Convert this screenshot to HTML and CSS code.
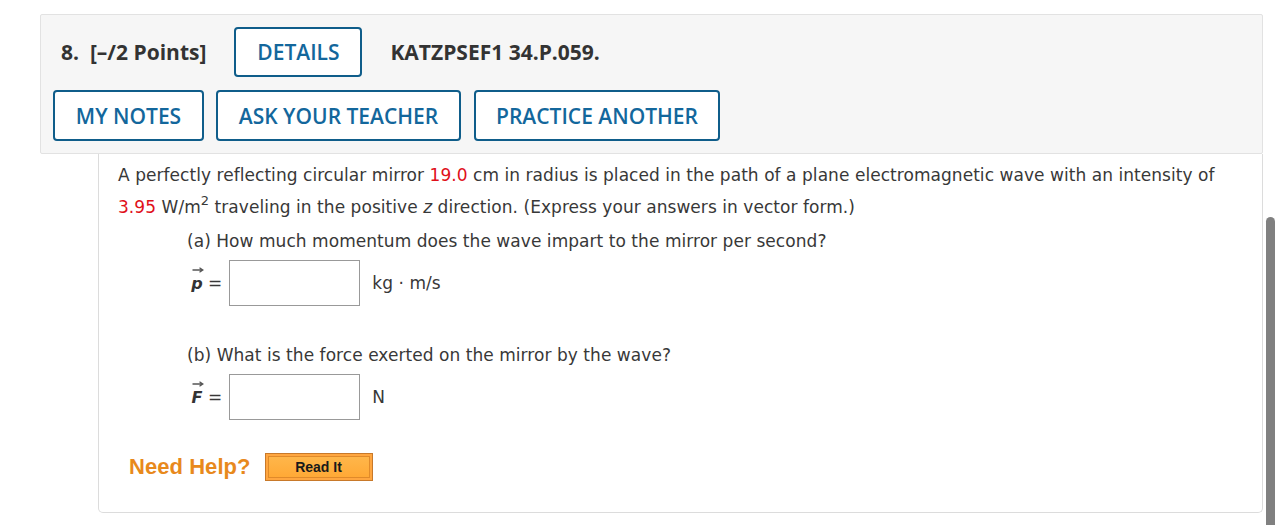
FILE: index.html
```html
<!DOCTYPE html>
<html>
<head>
<meta charset="utf-8">
<link rel="stylesheet" href="styles.css">
</head>
<body>
<div class="question">
  <div class="header">
    <div class="row1">
      <span class="qnum">8.&nbsp; [–/2 Points]</span>
      <button class="btn btn-details">DETAILS</button>
      <span class="qid">KATZPSEF1 34.P.059.</span>
    </div>
    <div class="row2">
      <button class="btn btn-notes">MY NOTES</button>
      <button class="btn btn-ask">ASK YOUR TEACHER</button>
      <button class="btn btn-practice">PRACTICE ANOTHER</button>
    </div>
  </div>
  <div class="qbody">
    <p class="intro">A perfectly reflecting circular mirror <span class="red">19.0</span> cm in radius is placed in the path of a plane electromagnetic wave with an intensity of <span class="red">3.95</span> W/m<sup>2</sup> traveling in the positive <i>z</i> direction. (Express your answers in vector form.)</p>
    <div class="part">
      <p class="prompt">(a) How much momentum does the wave impart to the mirror per second?</p>
      <div class="answer">
        <span class="vec"><svg class="arrow" width="12" height="6" viewBox="0 0 12 6"><path d="M0.5 3H10.5M7.5 0.8L10.8 3L7.5 5.2" fill="none" stroke="#555" stroke-width="1.3"/></svg><b><i>p</i></b></span>
        <span class="eq">=</span>
        <span class="box"></span>
        <span class="unit">kg · m/s</span>
      </div>
      <p class="prompt prompt-b">(b) What is the force exerted on the mirror by the wave?</p>
      <div class="answer">
        <span class="vec"><svg class="arrow" width="12" height="6" viewBox="0 0 12 6"><path d="M0.5 3H10.5M7.5 0.8L10.8 3L7.5 5.2" fill="none" stroke="#555" stroke-width="1.3"/></svg><b><i>F</i></b></span>
        <span class="eq">=</span>
        <span class="box"></span>
        <span class="unit">N</span>
      </div>
    </div>
    <div class="help">
      <span class="need">Need Help?</span>
      <button class="readit">Read It</button>
    </div>
  </div>
</div>
<div class="scrollthumb"></div>
</body>
</html>
```

FILE: styles.css
```css
html, body {
  margin: 0;
  padding: 0;
  background: #ffffff;
}
body {
  height: 525px;
  overflow: hidden;
  position: relative;
}
.question {
  margin: 14px 0 0 40px;
  width: 1223px;
}
.header {
  background: #f6f6f6;
  border: 1px solid #e2e2e2;
  border-radius: 2px;
  padding: 12px 0 12px 0;
  font-family: "Open Sans", "Noto Sans", sans-serif;
}
.row1 {
  display: flex;
  align-items: center;
  padding-left: 20px;
  height: 50px;
}
.qnum, .qid {
  font-weight: 700;
  font-size: 21px;
  color: #333333;
}
.btn {
  font-family: "Open Sans", "Noto Sans", sans-serif;
  font-size: 21px;
  font-weight: 600;
  color: #13679c;
  background: #ffffff;
  border: 2px solid #0f5d8a;
  border-radius: 4px;
  height: 51px;
  padding: 0;
  box-sizing: border-box;
}
.btn-details {
  margin-left: 28px;
  margin-right: 28px;
  width: 128px;
  height: 50px;
}
.row2 {
  display: flex;
  gap: 12px;
  padding-left: 12px;
  margin-top: 13px;
}
.btn-notes { width: 151px; }
.btn-ask { width: 245px; }
.btn-practice { width: 246px; margin-left: 1px; }

.qbody {
  margin-left: 58px;
  border: 1px solid #dcdcdc;
  border-top: none;
  border-radius: 0 0 5px 5px;
  height: 359px;
  box-sizing: border-box;
  padding: 5px 20px 0 19px;
  font-family: "DejaVu Sans", Verdana, sans-serif;
  font-size: 17px;
  letter-spacing: 0.05px;
  color: #383838;
}
.intro {
  margin: 0;
  line-height: 32px;
}
.red { color: #e0101a; }
sup {
  font-size: 13px;
  line-height: 0;
  vertical-align: 8px;
}
.part {
  padding-left: 69px;
}
.prompt {
  margin: 2px 0 0 0;
  line-height: 32px;
}
.prompt-b {
  margin-top: 33px;
}
.answer {
  display: flex;
  align-items: center;
  height: 46px;
  margin-top: 3px;
}
.vec {
  position: relative;
  width: 16px;
  margin-left: 2px;
  display: inline-block;
  text-align: center;
  font-size: 16px;
  color: #333;
}
.vec b { font-weight: 700; }
.arrow {
  position: absolute;
  top: -7px;
  left: 3px;
}
.eq {
  margin-left: 3px;
  margin-right: 7px;
}
.box {
  display: inline-block;
  width: 131px;
  height: 46px;
  box-sizing: border-box;
  border: 1px solid #999999;
  background: #fff;
}
.unit {
  margin-left: 12px;
}
.help {
  display: flex;
  align-items: center;
  margin-top: 33px;
  padding-left: 11px;
}
.need {
  font-family: "Liberation Sans", Arial, sans-serif;
  font-weight: 700;
  font-size: 22px;
  color: #e8891c;
}
.readit {
  margin-left: 14px;
  width: 108px;
  height: 28px;
  background: linear-gradient(#ffb84d, #ffa733);
  border: 1px solid #c8792a;
  box-shadow: inset 0 0 0 2px #ffa640, inset 0 0 0 3px #e08a2a;
  font-family: "Liberation Sans", Arial, sans-serif;
  font-weight: 700;
  font-size: 14px;
  color: #1a1a1a;
  padding: 0;
}
.scrollthumb {
  position: absolute;
  left: 1266px;
  top: 217px;
  width: 9px;
  height: 320px;
  background: #808080;
  border-radius: 5px 5px 0 0;
}
```
